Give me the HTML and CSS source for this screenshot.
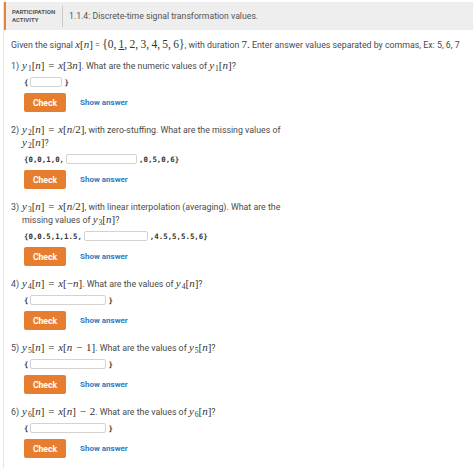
FILE: index.html
```html
<!DOCTYPE html>
<html lang="en">
<head>
<meta charset="utf-8">
<title>1.1.4: Discrete-time signal transformation values.</title>
<link rel="stylesheet" href="styles.css">
</head>
<body>
<div class="activity">
  <header class="act-head">
    <div class="act-label">PARTICIPATION<br>ACTIVITY</div>
    <div class="act-sep"></div>
    <div class="act-title">1.1.4: Discrete-time signal transformation values.</div>
  </header>
  <div class="act-body">
    <p class="intro">Given the signal <span class="math"><i>x</i>[<i>n</i>]</span> = <span class="math set">{0,&thinsp;<u>1</u>,&thinsp;2,&thinsp;3,&thinsp;4,&thinsp;5,&thinsp;6}</span>, with duration <span class="math">7.</span> Enter answer values separated by commas, Ex: 5, 6, 7</p>
    <ol class="questions">
      <li class="q">
        <div class="q-text"><span class="num">1)</span><span class="q-body"><span class="math"><i>y</i><sub>1</sub>[<i>n</i>] <span class="op">=</span> <i>x</i>[3<i>n</i>]</span>. What are the numeric values of <span class="math"><i>y</i><sub>1</sub>[<i>n</i>]</span>?</span></div>
        <div class="answer-row"><span class="code">{</span><input class="ans w1" type="text"><span class="code">}</span></div>
        <div class="actions"><button class="check">Check</button><button class="show">Show answer</button></div>
      </li>
      <li class="q">
        <div class="q-text"><span class="num">2)</span><span class="q-body"><span class="math"><i>y</i><sub>2</sub>[<i>n</i>] <span class="op">=</span> <i>x</i>[<i>n</i>/2]</span>, with zero-stuffing. What are the missing values of <span class="math"><i>y</i><sub>2</sub>[<i>n</i>]</span>?</span></div>
        <div class="answer-row"><span class="code">{0,0,1,0,</span><input class="ans w2" type="text"><span class="code">,0,5,0,6}</span></div>
        <div class="actions"><button class="check">Check</button><button class="show">Show answer</button></div>
      </li>
      <li class="q">
        <div class="q-text"><span class="num">3)</span><span class="q-body"><span class="math"><i>y</i><sub>3</sub>[<i>n</i>] <span class="op">=</span> <i>x</i>[<i>n</i>/2]</span>, with linear interpolation (averaging). What are the missing values of <span class="math"><i>y</i><sub>3</sub>[<i>n</i>]</span>?</span></div>
        <div class="answer-row"><span class="code">{0,0.5,1,1.5,</span><input class="ans w3" type="text"><span class="code">,4.5,5,5.5,6}</span></div>
        <div class="actions"><button class="check">Check</button><button class="show">Show answer</button></div>
      </li>
      <li class="q">
        <div class="q-text"><span class="num">4)</span><span class="q-body"><span class="math"><i>y</i><sub>4</sub>[<i>n</i>] <span class="op">=</span> <i>x</i>[−<i>n</i>]</span>. What are the values of <span class="math"><i>y</i><sub>4</sub>[<i>n</i>]</span>?</span></div>
        <div class="answer-row"><span class="code">{</span><input class="ans w4" type="text"><span class="code">}</span></div>
        <div class="actions"><button class="check">Check</button><button class="show">Show answer</button></div>
      </li>
      <li class="q">
        <div class="q-text"><span class="num">5)</span><span class="q-body"><span class="math"><i>y</i><sub>5</sub>[<i>n</i>] <span class="op">=</span> <i>x</i>[<i>n</i> <span class="op">−</span> 1]</span>. What are the values of <span class="math"><i>y</i><sub>5</sub>[<i>n</i>]</span>?</span></div>
        <div class="answer-row"><span class="code">{</span><input class="ans w4" type="text"><span class="code">}</span></div>
        <div class="actions"><button class="check">Check</button><button class="show">Show answer</button></div>
      </li>
      <li class="q">
        <div class="q-text"><span class="num">6)</span><span class="q-body"><span class="math"><i>y</i><sub>6</sub>[<i>n</i>] <span class="op">=</span> <i>x</i>[<i>n</i>] <span class="op">−</span> 2</span>. What are the values of <span class="math"><i>y</i><sub>6</sub>[<i>n</i>]</span>?</span></div>
        <div class="answer-row"><span class="code">{</span><input class="ans w4" type="text"><span class="code">}</span></div>
        <div class="actions"><button class="check">Check</button><button class="show">Show answer</button></div>
      </li>
    </ol>
  </div>
</div>
</body>
</html>
```
FILE: styles.css
```css
* { box-sizing: border-box; }
html, body { margin: 0; padding: 0; background: #fff; }
body {
  padding-top: 2px;
  font-family: Roboto, "Liberation Sans", sans-serif;
  font-size: 8.8px;
  color: #4a4a4a;
}
.activity {
  margin-left: 3px;
  width: 470px;
  border-left: 1px solid #e4e4e4;
  min-height: 470px;
}
.act-head {
  height: 28px;
  background: #eeeeee;
  border-left: 2px solid #e5813a;
  display: flex;
  align-items: center;
  padding-left: 6px;
}
.act-label {
  font-size: 6px;
  line-height: 8px;
  font-weight: 700;
  color: #555;
  width: 50px;
}
.act-sep {
  width: 1px;
  height: 21px;
  background: #c9c9c9;
  margin-right: 6px;
}
.act-title {
  font-size: 8.7px;
  color: #555;
}
.act-body {
  padding: 8px 0 0 7px;
}
.intro {
  margin: 0 0 8px;
  line-height: 14px;
}
.math {
  font-family: "Liberation Serif", "DejaVu Serif", serif;
  font-size: 11px;
  line-height: 10px;
  color: #333;
  white-space: nowrap;
}
.math.set { font-size: 11.5px; }
.math i { font-style: italic; }
.math sub { font-size: 7.5px; vertical-align: -2px; line-height: 0; margin-left: 1px; }
.math .op { padding: 0 1px; }
.math u { text-decoration: underline; text-underline-offset: 1px; }
.questions {
  list-style: none;
  margin: 0;
  padding: 0;
}
.q { margin-bottom: 12px; }
.q-text {
  display: flex;
  line-height: 13px;
}
.num { width: 11px; flex: none; }
.q-body { max-width: 264px; }
.answer-row {
  display: flex;
  align-items: center;
  height: 12px;
  margin: 3px 0 0 13px;
}
.code {
  font-family: "DejaVu Sans Mono", "Liberation Mono", monospace;
  font-weight: 700;
  font-size: 7.4px;
  color: #333;
}
.ans {
  height: 10px;
  border: 1px solid #d3d3d3;
  border-radius: 2px;
  background: #fff;
  margin: 0 2px;
  padding: 0;
}
.w1 { width: 32px; }
.w2 { width: 71px; }
.w3 { width: 64px; }
.w4 { width: 76px; }
.actions {
  display: flex;
  align-items: center;
  margin: 5px 0 0 13px;
}
.check {
  width: 42px;
  height: 19px;
  border: none;
  border-radius: 2px;
  background: #e77d2e;
  color: #fff;
  font-family: Roboto, "Liberation Sans", sans-serif;
  font-weight: 700;
  font-size: 8.6px;
  padding: 0;
}
.show {
  border: none;
  background: none;
  padding: 0;
  margin-left: 14px;
  color: #2b7bbd;
  font-family: Roboto, "Liberation Sans", sans-serif;
  font-weight: 700;
  font-size: 8px;
}
```
